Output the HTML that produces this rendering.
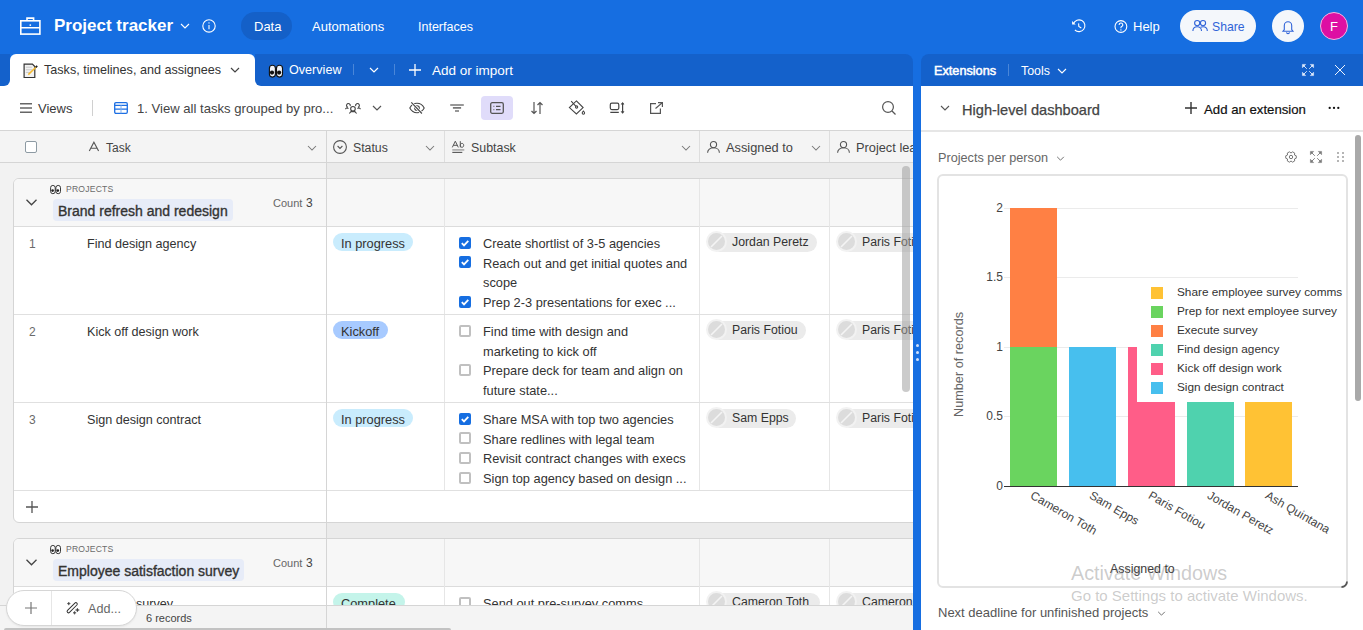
<!DOCTYPE html>
<html><head><meta charset="utf-8">
<style>
*{box-sizing:border-box;margin:0;padding:0}
html,body{width:1363px;height:630px;overflow:hidden;background:#166ee1;font-family:"Liberation Sans",sans-serif;color:#333}
.a{position:absolute}
.t{position:absolute;white-space:nowrap;line-height:1}
svg{position:absolute;overflow:visible}
.clip{position:absolute;left:0;top:0;overflow:hidden}
.hl{position:absolute;height:1px;background:#dedede}
.vl{position:absolute;width:1px;background:#dedede}
.cb{position:absolute;width:12px;height:12px;border-radius:2px}
.cb.on{background:#166ee1}
.cb.off{border:2px solid #c0c0c0;background:#fff}
.st{font-size:12.6px;color:#333}
.pill{position:absolute;height:19px;border-radius:10px;background:#ebebeb}
.av{position:absolute;width:21px;height:21px;border-radius:50%;background:#dcdcdc;border:2px solid #f2f2f2}
</style></head><body>
<!-- TOP BAR -->
<svg style="left:20px;top:17px" width="21" height="18" viewBox="0 0 21 18" fill="none" stroke="#fff" stroke-width="1.6"><rect x=".8" y="3.8" width="19.1" height="13.3"/><path d="M7 3.8V1.1h6.6v2.7M.8 10.8h19.1"/><circle cx="10.3" cy="8.1" r=".9" fill="#fff" stroke="none"/></svg>
<div class="t" style="left:54px;top:17px;font-size:17px;font-weight:bold;color:#fff">Project tracker</div>
<svg style="left:180px;top:22.5px" width="10" height="6" viewBox="0 0 10 6" fill="none" stroke="#fff" stroke-width="1.1"><path d="M1 1l4 4 4-4"/></svg>
<svg style="left:202px;top:19px" width="14" height="14" viewBox="0 0 14 14" fill="none" stroke="#fff" stroke-width="1.1"><circle cx="7" cy="6.9" r="6.2"/><path d="M7 5.9v4.3"/><circle cx="7" cy="3.9" r=".65" fill="#fff" stroke="none"/></svg>
<div class="a" style="left:241px;top:12px;width:51px;height:28px;border-radius:14px;background:#1460c8"></div>
<div class="t" style="left:254px;top:20px;font-size:13px;color:#fff">Data</div>
<div class="t" style="left:312px;top:20px;font-size:13px;color:#fff">Automations</div>
<div class="t" style="left:418px;top:20.6px;font-size:12.5px;color:#fff">Interfaces</div>
<svg style="left:1071px;top:19px" width="15" height="14" viewBox="0 0 15 14" fill="none" stroke="#fff" stroke-width="1.1"><path d="M2.5 4.6A5.9 5.9 0 1 1 3.9 11"/><path d="M1.1 2L1.1 5.6 4.7 5.6z" fill="#fff" stroke="none"/><path d="M7.6 4.4l.2 3 2.5 1.600"/></svg>
<svg style="left:1114px;top:19.5px" width="14" height="14" viewBox="0 0 14 14" fill="none" stroke="#fff" stroke-width="1.1"><circle cx="6.9" cy="6.5" r="5.9"/><path d="M5.100 4.900a1.850 1.850 0 1 1 2.600 1.700c-.5.250-.8.600-.8 1.100v.6"/><circle cx="6.9" cy="9.9" r=".7" fill="#fff" stroke="none"/></svg>
<div class="t" style="left:1133px;top:20px;font-size:13px;color:#fff">Help</div>
<div class="a" style="left:1180px;top:10px;width:76px;height:32px;border-radius:16px;background:#f4f7fb"></div>
<svg style="left:1192px;top:19px" width="16" height="13" viewBox="0 0 16 13" fill="none" stroke="#2f63d8" stroke-width="1.1"><circle cx="5.2" cy="4.1" r="2.6"/><path d="M.9 12c0-2.600 1.900-4.300 4.300-4.300S9.500 9.400 9.500 12"/><circle cx="11" cy="4.1" r="2.6"/><path d="M8.6 8.200c.7-.4 1.500-.5 2.400-.5 2.400 0 4.300 1.700 4.300 4.300"/></svg>
<div class="t" style="left:1212px;top:21px;font-size:12.2px;color:#2f63d8">Share</div>
<div class="a" style="left:1272px;top:10px;width:32px;height:32px;border-radius:16px;background:#f4f7fb"></div>
<svg style="left:1282px;top:20px" width="12" height="14" viewBox="0 0 12 14" fill="none" stroke="#2f63d8" stroke-width="1.1"><path d="M1 11.300h10l-1.300-1.700V5.400a3.700 3.700 0 0 0-7.400 0v4.200z"/><path d="M4.600 12.200a1.400 1.400 0 0 0 2.800 0"/></svg>
<div class="a" style="left:1320px;top:12px;width:28px;height:28px;border-radius:14px;background:#dd0fa3;border:1px solid #f3b6e0"></div>
<div class="t" style="left:1330px;top:20px;font-size:13px;color:#fff">F</div>
<!-- LEFT PANE -->
<div class="clip" style="width:913px;height:630px">
<div class="a" style="left:0;top:86px;width:913px;height:544px;background:#f2f2f2"></div>
<div class="a" style="left:0;top:80px;width:913px;height:50px;background:#fff"></div>
<div class="a" style="left:0;top:54px;width:10px;height:32px;background:#1461cb;border-bottom-right-radius:6px"></div>
<div class="a" style="left:255px;top:54px;width:658px;height:32px;background:#1461cb;border-bottom-left-radius:6px;border-top-right-radius:8px"></div>
<div class="a" style="left:10px;top:54px;width:245px;height:32px;background:#fff;border-top-left-radius:6px;border-top-right-radius:6px"></div>
<!-- memo emoji -->
<svg style="left:23px;top:62.5px" width="16" height="16" viewBox="0 0 16 16"><path d="M1.100 1.100h8.300l2.400 2.400v11H1.100z" fill="#f2f2f2" stroke="#333" stroke-width="1.200"/><path d="M2.800 4.200h6M2.800 6.800h6.500M2.800 9.400h5" stroke="#c8c8c8" stroke-width="1"/><path d="M5.300 11.600l7.800-7.600" stroke="#f4b92f" stroke-width="1.500"/><path d="M12.700 4.300l1.500-1.500" stroke="#222" stroke-width="1.700"/></svg>
<div class="t" style="left:44px;top:64px;font-size:12.6px;color:#333">Tasks, timelines, and assignees</div>
<svg style="left:230px;top:67px" width="10" height="6" viewBox="0 0 10 6" fill="none" stroke="#444" stroke-width="1.2"><path d="M1 1l4 4 4-4"/></svg>
<!-- eyes emoji -->
<svg style="left:268px;top:64px" width="16" height="14" viewBox="0 0 16 14"><rect x="1.400" y="1.300" width="6" height="11.800" rx="3" fill="#eef2f8" stroke="#111" stroke-width="1.100"/><rect x="8.500" y="1.300" width="6" height="11.800" rx="3" fill="#eef2f8" stroke="#111" stroke-width="1.100"/><circle cx="4" cy="8.600" r="2.100" fill="#111"/><circle cx="11.100" cy="8.600" r="2.100" fill="#111"/></svg>
<div class="t" style="left:289px;top:64px;font-size:12.6px;color:#fff">Overview</div>
<div class="a" style="left:353px;top:64px;width:1px;height:11px;background:#4a86d8"></div>
<svg style="left:369px;top:67px" width="10" height="6" viewBox="0 0 10 6" fill="none" stroke="#fff" stroke-width="1.2"><path d="M1 1l4 4 4-4"/></svg>
<div class="a" style="left:394px;top:64px;width:1px;height:11px;background:#4a86d8"></div>
<svg style="left:409px;top:64px" width="12" height="12" viewBox="0 0 12 12" fill="none" stroke="#fff" stroke-width="1.3"><path d="M6 0v12M0 6h12"/></svg>
<div class="t" style="left:432px;top:64px;font-size:13.5px;color:#fff">Add or import</div>
<!-- toolbar -->
<svg style="left:20px;top:103px" width="12" height="10" viewBox="0 0 12 10" fill="none" stroke="#666" stroke-width="1.600"><path d="M0 .8h12M0 5h12M0 9.200h12"/></svg>
<div class="t" style="left:38px;top:102px;font-size:13px;color:#3a3a3a">Views</div>
<div class="a" style="left:92px;top:100px;width:1px;height:16px;background:#d0d0d0"></div>
<svg style="left:114px;top:102px" width="14" height="12" viewBox="0 0 14 12" fill="none" stroke="#1d6fe3" stroke-width="1.3"><rect x=".7" y=".7" width="12.600" height="10.600" rx="1.200"/><path d="M.7 3.300h12.600M.7 7.100h12.600"/><path d="M7 3.300v8" stroke-width="1" stroke="#7fb0f0"/></svg>
<div class="t" style="left:137px;top:102px;font-size:13.1px;color:#444">1. View all tasks grouped by pro...</div>
<svg style="left:344px;top:101px" width="18" height="14" viewBox="0 0 18 14" fill="none" stroke="#444" stroke-width="1.1"><circle cx="8.95" cy="7.75" r="2.3"/><path d="M5.300 12.500L7 10.600h3.900l1.700 1.900"/><g transform="translate(0 .8)"><path d="M6.200 4.300A1.900 1.900 0 1 0 3.300 5.200L1.400 7.300M3.200 6.300l1.300.4"/><path d="M11.700 4.300A1.900 1.900 0 1 1 14.600 5.200l1.900 2.100M14.700 6.300l-1.300.4"/></g></svg>
<svg style="left:372px;top:105px" width="10" height="6" viewBox="0 0 10 6" fill="none" stroke="#555" stroke-width="1.2"><path d="M1 1l4 4 4-4"/></svg>
<svg style="left:409px;top:102px" width="16" height="12" viewBox="0 0 16 12" fill="none" stroke="#444" stroke-width="1.1"><path d="M.8 6C2.500 2.800 5 1.300 8 1.300S13.500 2.800 15.200 6C13.500 9.200 11 10.700 8 10.700S2.500 9.200 .8 6z"/><circle cx="8" cy="6" r="2.300"/><path d="M2.300 .3l10.600 11.200" stroke="#fff" stroke-width="2.600"/><path d="M2.300 .3l10.600 11.200"/></svg>
<svg style="left:450px;top:104px" width="14" height="8" viewBox="0 0 14 8" fill="none" stroke="#777" stroke-width="1.6"><path d="M.2 1h13.6M2.900 3.900h8.200M5 7h4"/></svg>
<div class="a" style="left:481px;top:96px;width:32px;height:24px;border-radius:4px;background:#e0dcfa"></div>
<svg style="left:490px;top:102px" width="14" height="12" viewBox="0 0 14 12" fill="none" stroke="#555" stroke-width="1.3"><rect x=".7" y=".7" width="12.6" height="10.6" rx="1.5"/><path d="M3.5 4.3h.8M3.5 7.7h.8M6 4.3h4.5M6 7.7h4.5"/></svg>
<svg style="left:531px;top:102px" width="12" height="12" viewBox="0 0 12 12" fill="none" stroke="#555" stroke-width="1.2"><path d="M3 0v11.5M.5 9l2.5 2.5L5.5 9M9 12V.5M6.5 3L9 .5 11.5 3"/></svg>
<svg style="left:568px;top:100px" width="18" height="16" viewBox="0 0 18 16" fill="none" stroke="#444" stroke-width="1.1"><path d="M8.400 .9L15.100 7.600 8.400 14 1.400 7.600z"/><path d="M3.200 1.100L7.700 6.100"/><circle cx="8.600" cy="7" r="1.100"/><path d="M15.400 11c.8.9 1.200 1.500 1.200 2a1.200 1.200 0 0 1-2.400 0c0-.5.400-1.100 1.200-2z"/></svg>
<svg style="left:609px;top:101px" width="16" height="14" viewBox="0 0 16 14" fill="none" stroke="#444" stroke-width="1.2"><rect x="1.300" y="2.200" width="8.500" height="6.400" rx="1.500"/><path d="M1.300 11.400h8.500M13.600 2.200v9.400"/><path d="M12.200 3.200l1.400-1.800 1.400 1.800zM12.200 10.600l1.400 1.800 1.400-1.800z" fill="#444" stroke-width=".6"/></svg>
<svg style="left:650px;top:102px" width="13" height="12" viewBox="0 0 13 12" fill="none" stroke="#555" stroke-width="1.2"><path d="M6 1.6H.6v9.8h9.8V6.5"/><path d="M5.5 6.5L12.4.6M8 .6h4.4V5"/></svg>
<svg style="left:882px;top:101px" width="14" height="14" viewBox="0 0 14 14" fill="none" stroke="#555" stroke-width="1.2"><circle cx="6" cy="6" r="5.4"/><path d="M10 10l3.5 3.5"/></svg>
<!-- grid header -->
<div class="a" style="left:0;top:130px;width:913px;height:33px;background:#f4f4f4;border-top:1px solid #d5d5d5;border-bottom:1px solid #d5d5d5"></div>
<div class="vl" style="left:444px;top:131px;height:31px;background:#dedede"></div><div class="vl" style="left:699px;top:131px;height:31px;background:#dedede"></div><div class="vl" style="left:829px;top:131px;height:31px;background:#dedede"></div>
<div class="a" style="left:25px;top:141px;width:12px;height:12px;border:1.3px solid #8d9aa3;border-radius:2px;background:#fff"></div>
<svg style="left:88px;top:141px" width="11" height="11" viewBox="0 0 11 11" fill="none" stroke="#555" stroke-width="1.1"><path d="M1.3 10.100L5.900 1.300 10.600 10.100M2.900 7.300h6"/></svg>
<div class="t" style="left:106px;top:141.8px;font-size:12px;color:#444">Task</div>
<svg style="left:306.5px;top:145px" width="10" height="6" viewBox="0 0 10 6" fill="none" stroke="#777" stroke-width="1.05"><path d="M1 1l4 4 4-4"/></svg>
<svg style="left:333px;top:140px" width="14" height="14" viewBox="0 0 14 14" fill="none" stroke="#555" stroke-width="1.1"><circle cx="7" cy="7" r="6.4"/><path d="M4.6 6l2.4 2.400L9.4 6"/></svg>
<div class="t" style="left:353px;top:141.8px;font-size:12.3px;color:#444">Status</div>
<svg style="left:424.5px;top:145px" width="10" height="6" viewBox="0 0 10 6" fill="none" stroke="#777" stroke-width="1.05"><path d="M1 1l4 4 4-4"/></svg>
<svg style="left:451px;top:140px" width="14" height="14" viewBox="0 0 14 14" fill="none" stroke="#555" stroke-width="1"><path d="M1.300 7.400L4.300 1.200l3 6.200M2.300 5.300h4"/><path d="M9.300 1.200v6.200M9.300 5.300c0-1.200.8-1.900 1.700-1.900s1.700.7 1.700 1.900-.8 2-1.700 2-1.700-.8-1.700-2"/><path d="M1.300 9.900h12" stroke="#aaa" stroke-width="1.6"/><path d="M1.300 12.400h10" stroke="#555" stroke-width="1.1"/></svg>
<div class="t" style="left:471px;top:141.8px;font-size:12.4px;color:#444">Subtask</div>
<svg style="left:680.5px;top:145px" width="10" height="6" viewBox="0 0 10 6" fill="none" stroke="#777" stroke-width="1.05"><path d="M1 1l4 4 4-4"/></svg>
<svg style="left:707px;top:141px" width="13" height="12" viewBox="0 0 13 12" fill="none" stroke="#555" stroke-width="1.1"><circle cx="6.5" cy="3.6" r="3.1"/><path d="M.6 11.8c0-3 2.600-5 5.900-5s5.900 2 5.900 5"/></svg>
<div class="t" style="left:726px;top:141.8px;font-size:12.8px;color:#444">Assigned to</div>
<svg style="left:810.5px;top:145px" width="10" height="6" viewBox="0 0 10 6" fill="none" stroke="#777" stroke-width="1.05"><path d="M1 1l4 4 4-4"/></svg>
<svg style="left:837px;top:141px" width="13" height="12" viewBox="0 0 13 12" fill="none" stroke="#555" stroke-width="1.1"><circle cx="6.5" cy="3.6" r="3.1"/><path d="M.6 11.8c0-3 2.600-5 5.900-5s5.900 2 5.900 5"/></svg>
<div class="t" style="left:856px;top:141.8px;font-size:12.8px;color:#444">Project lead</div>
<div class="a" style="left:326px;top:163px;width:600px;height:16px;background:#ebebeb;border-bottom:1px solid #d5d5d5"></div>
<div class="a" style="left:326px;top:522px;width:600px;height:17px;background:#ebebeb;border-top:1px solid #d5d5d5;border-bottom:1px solid #d5d5d5"></div>
<div class="a" style="left:13px;top:178px;width:1000px;height:345px;background:#fff;border:1px solid #d5d5d5;border-radius:6px 0 0 6px"></div>
<div class="a" style="left:14px;top:179px;width:999px;height:48px;background:#f7f7f7;border-top-left-radius:5px;border-bottom:1px solid #dcdcdc"></div>
<div class="vl" style="left:444px;top:179px;height:312px;background:#e6e6e6"></div>
<div class="vl" style="left:699px;top:179px;height:312px;background:#e6e6e6"></div>
<div class="vl" style="left:829px;top:179px;height:312px;background:#e6e6e6"></div>
<div class="a" style="left:13px;top:538px;width:1000px;height:163px;background:#fff;border:1px solid #d5d5d5;border-radius:6px 0 0 6px"></div>
<div class="a" style="left:14px;top:539px;width:999px;height:48px;background:#f7f7f7;border-top-left-radius:5px;border-bottom:1px solid #dcdcdc"></div>
<div class="vl" style="left:444px;top:539px;height:161px;background:#e6e6e6"></div>
<div class="vl" style="left:699px;top:539px;height:161px;background:#e6e6e6"></div>
<div class="vl" style="left:829px;top:539px;height:161px;background:#e6e6e6"></div>
<svg style="left:26px;top:199px" width="11" height="7" viewBox="0 0 11 7" fill="none" stroke="#444" stroke-width="1.3"><path d="M.5 .8l5 5 5-5"/></svg>
<svg style="left:50px;top:185px" width="12" height="10" viewBox="0 0 12 10"><rect x=".6" y=".4" width="4.600" height="8.300" rx="2.300" fill="#fafafa" stroke="#222" stroke-width=".9"/><rect x="5.900" y=".4" width="4.600" height="8.300" rx="2.300" fill="#fafafa" stroke="#222" stroke-width=".9"/><circle cx="2.600" cy="5.600" r="1.300" fill="#222"/><circle cx="7.800" cy="5.600" r="1.300" fill="#222"/></svg>
<div class="t" style="left:66px;top:184.5px;font-size:8.6px;color:#6b6b6b;letter-spacing:0.2px">PROJECTS</div>
<div class="a" style="left:53px;top:199px;width:180px;height:22px;border-radius:4px;background:#e7ecf8"></div>
<div class="t" style="left:58px;top:203.5px;font-size:14px;color:#333;-webkit-text-stroke:0.35px #333">Brand refresh and redesign</div>
<div class="t" style="left:273px;top:198px;font-size:11px;color:#666;">Count</div>
<div class="t" style="left:306px;top:197px;font-size:12px;color:#444;">3</div>
<svg style="left:26px;top:559px" width="11" height="7" viewBox="0 0 11 7" fill="none" stroke="#444" stroke-width="1.3"><path d="M.5 .8l5 5 5-5"/></svg>
<svg style="left:50px;top:545px" width="12" height="10" viewBox="0 0 12 10"><rect x=".6" y=".4" width="4.600" height="8.300" rx="2.300" fill="#fafafa" stroke="#222" stroke-width=".9"/><rect x="5.900" y=".4" width="4.600" height="8.300" rx="2.300" fill="#fafafa" stroke="#222" stroke-width=".9"/><circle cx="2.600" cy="5.600" r="1.300" fill="#222"/><circle cx="7.800" cy="5.600" r="1.300" fill="#222"/></svg>
<div class="t" style="left:66px;top:544.5px;font-size:8.6px;color:#6b6b6b;letter-spacing:0.2px">PROJECTS</div>
<div class="a" style="left:53px;top:559px;width:191px;height:22px;border-radius:4px;background:#e7ecf8"></div>
<div class="t" style="left:58px;top:563.5px;font-size:14px;color:#333;-webkit-text-stroke:0.35px #333">Employee satisfaction survey</div>
<div class="t" style="left:273px;top:558px;font-size:11px;color:#666;">Count</div>
<div class="t" style="left:306px;top:557px;font-size:12px;color:#444;">3</div>
<div class="hl" style="left:14px;top:314px;width:900px;background:#e0e0e0"></div>
<div class="hl" style="left:14px;top:402px;width:900px;background:#e0e0e0"></div>
<div class="hl" style="left:14px;top:490px;width:900px;background:#e0e0e0"></div>
<div class="t" style="left:29px;top:237.5px;font-size:12px;color:#6a6a6a;">1</div>
<div class="t" style="left:87px;top:238px;font-size:12.6px;color:#333;">Find design agency</div>
<div class="a" style="left:333px;top:233px;width:80px;height:18px;border-radius:9px;background:#c9ecfd"></div>
<div class="t" style="left:341px;top:238px;font-size:12.8px;color:#333;">In progress</div>
<div class="cb on" style="left:459px;top:237px"></div><svg style="left:459px;top:237px" width="12" height="12" viewBox="0 0 12 12" fill="none" stroke="#fff" stroke-width="1.8"><path d="M2.8 6.2l2.2 2.200L9.300 3.8"/></svg>
<div class="t" style="left:483px;top:238.0px;font-size:12.8px;color:#333;">Create shortlist of 3-5 agencies</div>
<div class="cb on" style="left:459px;top:256px"></div><svg style="left:459px;top:256px" width="12" height="12" viewBox="0 0 12 12" fill="none" stroke="#fff" stroke-width="1.8"><path d="M2.8 6.2l2.2 2.200L9.300 3.8"/></svg>
<div class="t" style="left:483px;top:257.5px;font-size:12.8px;color:#333;">Reach out and get initial quotes and</div>
<div class="t" style="left:483px;top:277.0px;font-size:12.8px;color:#333;">scope</div>
<div class="cb on" style="left:459px;top:296px"></div><svg style="left:459px;top:296px" width="12" height="12" viewBox="0 0 12 12" fill="none" stroke="#fff" stroke-width="1.8"><path d="M2.8 6.2l2.2 2.200L9.300 3.8"/></svg>
<div class="t" style="left:483px;top:296.5px;font-size:12.8px;color:#333;">Prep 2-3 presentations for exec ...</div>
<div class="pill" style="left:710px;top:233px;width:107px"></div>
<div class="av" style="left:706px;top:231px"></div>
<svg style="left:706px;top:231px" width="21" height="21" viewBox="0 0 21 21" fill="none" stroke="#f4f4f4" stroke-width="1.6"><path d="M5 16L16 5"/></svg>
<div class="t" style="left:732px;top:236px;font-size:12.3px;color:#333;">Jordan Peretz</div>
<div class="pill" style="left:840px;top:233px;width:110px"></div>
<div class="av" style="left:836px;top:231px"></div>
<svg style="left:836px;top:231px" width="21" height="21" viewBox="0 0 21 21" fill="none" stroke="#f4f4f4" stroke-width="1.6"><path d="M5 16L16 5"/></svg>
<div class="t" style="left:862px;top:236px;font-size:12.3px;color:#333;">Paris Fotiou</div>
<div class="t" style="left:29px;top:325.5px;font-size:12px;color:#6a6a6a;">2</div>
<div class="t" style="left:87px;top:326px;font-size:12.6px;color:#333;">Kick off design work</div>
<div class="a" style="left:333px;top:321px;width:55px;height:18px;border-radius:9px;background:#a7caff"></div>
<div class="t" style="left:341px;top:326px;font-size:12.8px;color:#333;">Kickoff</div>
<div class="cb off" style="left:459px;top:325px"></div>
<div class="t" style="left:483px;top:326.0px;font-size:12.8px;color:#333;">Find time with design and</div>
<div class="t" style="left:483px;top:345.5px;font-size:12.8px;color:#333;">marketing to kick off</div>
<div class="cb off" style="left:459px;top:364px"></div>
<div class="t" style="left:483px;top:365.0px;font-size:12.8px;color:#333;">Prepare deck for team and align on</div>
<div class="t" style="left:483px;top:384.5px;font-size:12.8px;color:#333;">future state...</div>
<div class="pill" style="left:710px;top:321px;width:96px"></div>
<div class="av" style="left:706px;top:319px"></div>
<svg style="left:706px;top:319px" width="21" height="21" viewBox="0 0 21 21" fill="none" stroke="#f4f4f4" stroke-width="1.6"><path d="M5 16L16 5"/></svg>
<div class="t" style="left:732px;top:324px;font-size:12.3px;color:#333;">Paris Fotiou</div>
<div class="pill" style="left:840px;top:321px;width:110px"></div>
<div class="av" style="left:836px;top:319px"></div>
<svg style="left:836px;top:319px" width="21" height="21" viewBox="0 0 21 21" fill="none" stroke="#f4f4f4" stroke-width="1.6"><path d="M5 16L16 5"/></svg>
<div class="t" style="left:862px;top:324px;font-size:12.3px;color:#333;">Paris Fotiou</div>
<div class="t" style="left:29px;top:413.5px;font-size:12px;color:#6a6a6a;">3</div>
<div class="t" style="left:87px;top:414px;font-size:12.6px;color:#333;">Sign design contract</div>
<div class="a" style="left:333px;top:409px;width:80px;height:18px;border-radius:9px;background:#c9ecfd"></div>
<div class="t" style="left:341px;top:414px;font-size:12.8px;color:#333;">In progress</div>
<div class="cb on" style="left:459px;top:413px"></div><svg style="left:459px;top:413px" width="12" height="12" viewBox="0 0 12 12" fill="none" stroke="#fff" stroke-width="1.8"><path d="M2.8 6.2l2.2 2.200L9.300 3.8"/></svg>
<div class="t" style="left:483px;top:414.0px;font-size:12.8px;color:#333;">Share MSA with top two agencies</div>
<div class="cb off" style="left:459px;top:432px"></div>
<div class="t" style="left:483px;top:433.5px;font-size:12.8px;color:#333;">Share redlines with legal team</div>
<div class="cb off" style="left:459px;top:452px"></div>
<div class="t" style="left:483px;top:453.0px;font-size:12.8px;color:#333;">Revisit contract changes with execs</div>
<div class="cb off" style="left:459px;top:472px"></div>
<div class="t" style="left:483px;top:472.5px;font-size:12.8px;color:#333;">Sign top agency based on design ...</div>
<div class="pill" style="left:710px;top:409px;width:86px"></div>
<div class="av" style="left:706px;top:407px"></div>
<svg style="left:706px;top:407px" width="21" height="21" viewBox="0 0 21 21" fill="none" stroke="#f4f4f4" stroke-width="1.6"><path d="M5 16L16 5"/></svg>
<div class="t" style="left:732px;top:412px;font-size:12.3px;color:#333;">Sam Epps</div>
<div class="pill" style="left:840px;top:409px;width:110px"></div>
<div class="av" style="left:836px;top:407px"></div>
<svg style="left:836px;top:407px" width="21" height="21" viewBox="0 0 21 21" fill="none" stroke="#f4f4f4" stroke-width="1.6"><path d="M5 16L16 5"/></svg>
<div class="t" style="left:862px;top:412px;font-size:12.3px;color:#333;">Paris Fotiou</div>
<div class="t" style="left:29px;top:597.5px;font-size:12px;color:#6a6a6a;">4</div>
<div class="t" style="left:87px;top:598px;font-size:12.6px;color:#333;">Execute survey</div>
<div class="a" style="left:333px;top:593px;width:72px;height:18px;border-radius:9px;background:#c4f4ea"></div>
<div class="t" style="left:341px;top:598px;font-size:12.8px;color:#333;">Complete</div>
<div class="cb off" style="left:459px;top:597px"></div>
<div class="t" style="left:483px;top:598.0px;font-size:12.8px;color:#333;">Send out pre-survey comms</div>
<div class="pill" style="left:710px;top:593px;width:110px"></div>
<div class="av" style="left:706px;top:591px"></div>
<svg style="left:706px;top:591px" width="21" height="21" viewBox="0 0 21 21" fill="none" stroke="#f4f4f4" stroke-width="1.6"><path d="M5 16L16 5"/></svg>
<div class="t" style="left:732px;top:596px;font-size:12.3px;color:#333;">Cameron Toth</div>
<div class="pill" style="left:840px;top:593px;width:110px"></div>
<div class="av" style="left:836px;top:591px"></div>
<svg style="left:836px;top:591px" width="21" height="21" viewBox="0 0 21 21" fill="none" stroke="#f4f4f4" stroke-width="1.6"><path d="M5 16L16 5"/></svg>
<div class="t" style="left:862px;top:596px;font-size:12.3px;color:#333;">Cameron Toth</div>
<svg style="left:26px;top:501px" width="12" height="12" viewBox="0 0 12 12" fill="none" stroke="#555" stroke-width="1.3"><path d="M6 0v12M0 6h12"/></svg>
<div class="vl" style="left:326px;top:130px;height:500px;background:#d5d5d5"></div>
<div class="a" style="left:902px;top:166px;width:8px;height:226px;border-radius:4px;background:rgba(160,160,160,.55)"></div>
<div class="a" style="left:0;top:605px;width:913px;height:25px;background:#f4f4f4;border-top:1px solid #d5d5d5"></div>
<div class="vl" style="left:326px;top:605px;height:25px;background:#d5d5d5"></div>
<div class="t" style="left:146px;top:613px;font-size:11px;color:#444;">6 records</div>
<div class="a" style="left:4px;top:628px;width:447px;height:4px;border-radius:2px;background:#c2c2c2"></div>
<div class="a" style="left:6px;top:590px;width:131px;height:36px;border-radius:18px;background:#fff;border:1px solid #d6d6d6;box-shadow:0 1px 2px rgba(0,0,0,.06)"></div>
<div class="vl" style="left:51px;top:591px;height:34px;background:#e6e6e6"></div>
<svg style="left:25px;top:602px" width="12" height="12" viewBox="0 0 12 12" fill="none" stroke="#777" stroke-width="1.2"><path d="M6 0v12M0 6h12"/></svg>
<svg style="left:65px;top:601px" width="15" height="14" viewBox="0 0 15 14"><rect x=".6" y="5.300" width="13.200" height="2.800" rx="1.400" transform="rotate(-45 7.200 6.700)" fill="none" stroke="#333" stroke-width="1"/><path d="M3.8 1.0Q3.8 2.6 5.4 2.6Q3.8 2.6 3.8 4.2Q3.8 2.6 2.1999999999999997 2.6Q3.8 2.6 3.8 1.0zM12.4 7Q12.4 9 14.4 9Q12.4 9 12.4 11Q12.4 9 10.4 9Q12.4 9 12.4 7zM9.6 10.200000000000001Q9.6 11.8 11.2 11.8Q9.6 11.8 9.6 13.4Q9.6 11.8 8.0 11.8Q9.6 11.8 9.6 10.200000000000001z" fill="#333" stroke="#333" stroke-width=".4"/></svg>
<div class="t" style="left:88px;top:603px;font-size:12.6px;color:#666;">Add...</div>
</div>
<div class="a" style="left:915.5px;top:344px;width:3px;height:3px;border-radius:2px;background:#cfe0fb"></div>
<div class="a" style="left:915.5px;top:351px;width:3px;height:3px;border-radius:2px;background:#cfe0fb"></div>
<div class="a" style="left:915.5px;top:358px;width:3px;height:3px;border-radius:2px;background:#cfe0fb"></div><div class="a" style="left:921px;top:86px;width:442px;height:544px;background:#fff"></div><div class="a" style="left:921px;top:54px;width:442px;height:32px;background:#1461cb;border-top-left-radius:8px"></div>
<div class="t" style="left:934px;top:65px;font-size:12.7px;color:#fff;-webkit-text-stroke:0.5px #fff">Extensions</div>
<div class="a" style="left:1008px;top:64px;width:1px;height:12px;background:#4a86d8"></div>
<div class="t" style="left:1021px;top:65px;font-size:12.4px;color:#fff;">Tools</div>
<svg style="left:1057px;top:67.5px" width="10" height="6" viewBox="0 0 10 6" fill="none" stroke="#fff" stroke-width="1.1"><path d="M1 1l4 4 4-4"/></svg>
<svg style="left:1302px;top:64px" width="12" height="12" viewBox="0 0 12 12" fill="none" stroke="#e6eefc" stroke-width=".9"><path d="M1.500 1.500l3.300 3.300M10.500 1.500L7.200 4.800M1.500 10.500l3.300-3.300M10.500 10.500L7.200 7.200"/><path d="M.4 .4h3.300L.4 3.700zM11.600 .4H8.300l3.300 3.300zM.4 11.600h3.300L.4 8.300zM11.600 11.600H8.300l3.300-3.300z" fill="#e6eefc" stroke-width=".5"/></svg>
<svg style="left:1335px;top:65px" width="10" height="10" viewBox="0 0 10 10" fill="none" stroke="#eef3fd" stroke-width="1"><path d="M0 0l10 10M10 0L0 10"/></svg>
<svg style="left:940px;top:105px" width="10" height="6" viewBox="0 0 10 6" fill="none" stroke="#555" stroke-width="1.1"><path d="M1 1l4 4 4-4"/></svg>
<div class="t" style="left:962px;top:103px;font-size:14.6px;color:#444;-webkit-text-stroke:0.25px #444">High-level dashboard</div>
<svg style="left:1185px;top:102px" width="12" height="12" viewBox="0 0 12 12" fill="none" stroke="#333" stroke-width="1.4"><path d="M6 0v12M0 6h12"/></svg>
<div class="t" style="left:1204px;top:103px;font-size:13.2px;color:#111;-webkit-text-stroke:0.2px #111">Add an extension</div>
<svg style="left:1328px;top:106px" width="12" height="4" viewBox="0 0 12 4" fill="#111"><circle cx="1.700" cy="1.900" r="1.150"/><circle cx="6" cy="1.900" r="1.150"/><circle cx="10.300" cy="1.900" r="1.150"/></svg>
<div class="a" style="left:921px;top:130px;width:442px;height:2px;background:#e6e6e6"></div>
<div class="a" style="left:1355px;top:135px;width:6px;height:266px;border-radius:3px;background:#a9a9a9"></div>
<div class="t" style="left:938px;top:152px;font-size:12.7px;color:#666;">Projects per person</div>
<svg style="left:1056px;top:155.5px" width="9" height="5" viewBox="0 0 10 6" fill="none" stroke="#666" stroke-width="1.1"><path d="M1 1l4 4 4-4"/></svg>
<svg style="left:1284.5px;top:151.3px" width="12" height="12" viewBox="0 0 12 12" fill="none" stroke="#777" stroke-width="1" stroke-linejoin="round"><path d="M9.46 4.00 L11.26 4.79 L11.26 7.21 L9.46 8.00 L9.68 9.95 L7.58 11.16 L6.00 10.00 L4.42 11.16 L2.32 9.95 L2.54 8.00 L0.74 7.21 L0.74 4.79 L2.54 4.00 L2.32 2.05 L4.42 0.84 L6.00 2.00 L7.58 0.84 L9.68 2.05z"/><circle cx="6" cy="6" r="1.7"/></svg>
<svg style="left:1310px;top:151px" width="12" height="12" viewBox="0 0 12 12" fill="none" stroke="#777" stroke-width=".9"><path d="M1.500 1.500l3.300 3.300M10.500 1.500L7.200 4.800M1.500 10.500l3.300-3.300M10.500 10.500L7.200 7.200"/><path d="M.4 .4h3.300L.4 3.700zM11.600 .4H8.300l3.300 3.300zM.4 11.600h3.300L.4 8.300zM11.600 11.600H8.300l3.300-3.300z" fill="#777" stroke-width=".5"/></svg>
<div class="a" style="left:1337px;top:152px;width:1.6px;height:1.6px;background:#b5b5b5"></div>
<div class="a" style="left:1342px;top:152px;width:1.6px;height:1.6px;background:#b5b5b5"></div>
<div class="a" style="left:1337px;top:156px;width:1.6px;height:1.6px;background:#b5b5b5"></div>
<div class="a" style="left:1342px;top:156px;width:1.6px;height:1.6px;background:#b5b5b5"></div>
<div class="a" style="left:1337px;top:160px;width:1.6px;height:1.6px;background:#b5b5b5"></div>
<div class="a" style="left:1342px;top:160px;width:1.6px;height:1.6px;background:#b5b5b5"></div>
<div class="a" style="left:937px;top:174px;width:411px;height:414px;border:2px solid #e3e3e3;border-radius:6px"></div>
<div class="a" style="left:1004px;top:416.0px;width:294px;height:1px;background:#ebebeb"></div>
<div class="a" style="left:1004px;top:346.5px;width:294px;height:1px;background:#ebebeb"></div>
<div class="a" style="left:1004px;top:277.0px;width:294px;height:1px;background:#ebebeb"></div>
<div class="a" style="left:1004px;top:207.5px;width:294px;height:1px;background:#ebebeb"></div>
<div class="t" style="left:940px;width:63px;text-align:right;top:201.5px;font-size:12px;color:#444">2</div>
<div class="t" style="left:940px;width:63px;text-align:right;top:271.0px;font-size:12px;color:#444">1.5</div>
<div class="t" style="left:940px;width:63px;text-align:right;top:340.5px;font-size:12px;color:#444">1</div>
<div class="t" style="left:940px;width:63px;text-align:right;top:410.0px;font-size:12px;color:#444">0.5</div>
<div class="t" style="left:940px;width:63px;text-align:right;top:479.5px;font-size:12px;color:#444">0</div>
<div class="a" style="left:1010px;top:347px;width:47px;height:139px;background:#6ad45f"></div>
<div class="a" style="left:1010px;top:208px;width:47px;height:139px;background:#ff8044"></div>
<div class="a" style="left:1069px;top:347px;width:47px;height:139px;background:#47bfee"></div>
<div class="a" style="left:1128px;top:347px;width:47px;height:139px;background:#ff5d88"></div>
<div class="a" style="left:1186.5px;top:347px;width:47px;height:139px;background:#4fd2ae"></div>
<div class="a" style="left:1245px;top:347px;width:47px;height:139px;background:#ffc234"></div>
<div class="a" style="left:1004px;top:485.5px;width:294px;height:1.5px;background:#333"></div>
<div class="a" style="left:1137px;top:280px;width:208px;height:122px;background:#fff"></div>
<div class="a" style="left:1151px;top:287px;width:12px;height:12px;background:#ffc234"></div>
<div class="t" style="left:1177px;top:287px;font-size:11.8px;color:#333;">Share employee survey comms</div>
<div class="a" style="left:1151px;top:306px;width:12px;height:12px;background:#6ad45f"></div>
<div class="t" style="left:1177px;top:306px;font-size:11.8px;color:#333;">Prep for next employee survey</div>
<div class="a" style="left:1151px;top:325px;width:12px;height:12px;background:#ff8044"></div>
<div class="t" style="left:1177px;top:325px;font-size:11.8px;color:#333;">Execute survey</div>
<div class="a" style="left:1151px;top:344px;width:12px;height:12px;background:#4fd2ae"></div>
<div class="t" style="left:1177px;top:344px;font-size:11.8px;color:#333;">Find design agency</div>
<div class="a" style="left:1151px;top:363px;width:12px;height:12px;background:#ff5d88"></div>
<div class="t" style="left:1177px;top:363px;font-size:11.8px;color:#333;">Kick off design work</div>
<div class="a" style="left:1151px;top:382px;width:12px;height:12px;background:#47bfee"></div>
<div class="t" style="left:1177px;top:382px;font-size:11.8px;color:#333;">Sign design contract</div>
<div class="t" style="left:1034.0px;top:489.5px;font-size:11.9px;color:#444;transform-origin:0 0;transform:rotate(30deg)">Cameron Toth</div>
<div class="t" style="left:1093.0px;top:489.5px;font-size:11.9px;color:#444;transform-origin:0 0;transform:rotate(30deg)">Sam Epps</div>
<div class="t" style="left:1152.0px;top:489.5px;font-size:11.9px;color:#444;transform-origin:0 0;transform:rotate(30deg)">Paris Fotiou</div>
<div class="t" style="left:1210.5px;top:489.5px;font-size:11.9px;color:#444;transform-origin:0 0;transform:rotate(30deg)">Jordan Peretz</div>
<div class="t" style="left:1269.0px;top:489.5px;font-size:11.9px;color:#444;transform-origin:0 0;transform:rotate(30deg)">Ash Quintana</div>
<div class="t" style="left:952.5px;top:416.5px;font-size:12.7px;color:#666;transform-origin:0 0;transform:rotate(-90deg)">Number of records</div>
<div class="t" style="left:1110px;top:563px;font-size:12.4px;color:#3a3a3a;">Assigned to</div>
<svg style="left:1338px;top:578px" width="10" height="10" viewBox="0 0 10 10" fill="none" stroke="#555" stroke-width="1.800"><path d="M9 3.500a5.500 5.500 0 0 1-5.500 5.500"/></svg>
<div class="t" style="left:938px;top:606px;font-size:13px;color:#555;">Next deadline for unfinished projects</div>
<svg style="left:1157px;top:611px" width="9" height="5" viewBox="0 0 10 6" fill="none" stroke="#666" stroke-width="1.1"><path d="M1 1l4 4 4-4"/></svg>
<div class="t" style="left:1071px;top:564px;font-size:19.8px;color:rgba(110,110,110,.36);">Activate Windows</div>
<div class="t" style="left:1071px;top:587.5px;font-size:15px;color:rgba(110,110,110,.36);">Go to Settings to activate Windows.</div>
</body></html>
